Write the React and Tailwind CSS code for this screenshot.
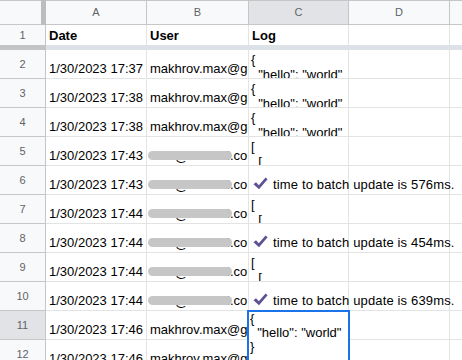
import React from "react";

const FONT = { fontFamily: '"Liberation Sans", Arial, sans-serif' };

const GRID = "border-[#e2e3e3]";
const HDRB = "border-[#c4c7c5]";

function Check() {
  return (
    <svg width="15" height="13" viewBox="0 0 15 13" className="shrink-0">
      <path d="M0.5 7.2 L3 5.2 L5.8 8.2 L12.6 0.5 L14.6 2.2 L6 12.3 Z" fill="#5e5194" />
    </svg>
  );
}

function RowHeader({ n, sel }) {
  return (
    <div
      className={`w-[46px] shrink-0 border-r border-b ${HDRB} ${sel ? "bg-[#e1e3e6]" : "bg-[#f8f9fa]"} flex items-center justify-center text-[11px] text-[#5f6368]`}
    >
      {n}
    </div>
  );
}

function Cell({ w, children, className = "" }) {
  return (
    <div className={`${w} shrink-0 border-r border-b ${GRID} overflow-hidden whitespace-nowrap flex items-end pb-[2px] pl-[3px] leading-[15px] ${className}`}>
      {children}
    </div>
  );
}

function Blurred() {
  return (
    <div className="w-[102px] shrink-0 border-r border-b border-[#e2e3e3] relative overflow-hidden">
      <span className="absolute left-[28px] bottom-[1px] leading-[15px]">@</span>
      <span className="absolute left-[80px] bottom-[2px] leading-[15px]">l.co</span>
      <div className="absolute left-[1px] top-[14px] w-[84px] h-[9px] rounded-full bg-[#c6c6c6] blur-[0.6px]" />
    </div>
  );
}

function LogMulti({ text }) {
  return (
    <div className={`w-[100px] shrink-0 border-r border-b ${GRID} overflow-hidden whitespace-pre pl-[2px] pt-[2px] leading-[15px]`}>
      {text}
    </div>
  );
}

function LogCheck({ ms }) {
  return (
    <div className={`w-[100px] shrink-0 border-r border-b ${GRID} whitespace-nowrap flex items-end pb-[2px] pl-[4px] leading-[15px] relative z-[1]`}>
      <span className="flex items-end gap-[5px]">
        <span className="mb-[2px]"><Check /></span>
        <span className="tracking-[0.15px]">time to batch update is {ms}ms.</span>
      </span>
    </div>
  );
}

function Empty({ w }) {
  return <div className={`${w} shrink-0 border-r border-b ${GRID}`} />;
}

const JSON_TXT = '{\n  "hello": "world"\n}';

const rows = [
  { n: 2, t: "17:37", user: "m", log: "json" },
  { n: 3, t: "17:38", user: "m", log: "json" },
  { n: 4, t: "17:38", user: "m", log: "json" },
  { n: 5, t: "17:43", user: "b", log: "arr" },
  { n: 6, t: "17:43", user: "b", log: "576" },
  { n: 7, t: "17:44", user: "b", log: "arr" },
  { n: 8, t: "17:44", user: "b", log: "454" },
  { n: 9, t: "17:44", user: "b", log: "arr" },
  { n: 10, t: "17:44", user: "b", log: "639" },
  { n: 11, t: "17:46", user: "m", log: "sel" },
  { n: 12, t: "17:46", user: "m", log: "json" },
];

export default function App() {
  return (
    <div className="w-[462px] h-[360px] overflow-hidden bg-white text-[13px] text-black" style={FONT}>
      {/* column header */}
      <div className="flex h-[25px]">
        <div className={`w-[41px] shrink-0 bg-[#f8f9fa] border-t border-b ${HDRB}`} />
        <div className="w-[5px] shrink-0 bg-[#bdbdbd]" />
        {[
          ["A", "w-[101px]", false],
          ["B", "w-[102px]", false],
          ["C", "w-[100px]", true],
          ["D", "w-[101px]", false],
        ].map(([l, w, sel]) => (
          <div
            key={l}
            className={`${w} shrink-0 border-t border-b border-r ${HDRB} ${sel ? "bg-[#e1e3e6]" : "bg-[#f8f9fa]"} flex items-center justify-center text-[11px] text-[#5f6368]`}
          >
            {l}
          </div>
        ))}
        <div className={`flex-1 border-t border-b ${HDRB} bg-[#f8f9fa]`} />
      </div>

      {/* row 1 */}
      <div className="flex h-[20px]">
        <div className={`w-[46px] shrink-0 border-r ${HDRB} bg-[#f8f9fa] flex items-center justify-center text-[11px] text-[#5f6368]`}>1</div>
        {["Date", "User", "Log"].map((h, i) => (
          <div
            key={h}
            className={`${["w-[101px]", "w-[102px]", "w-[100px]"][i]} shrink-0 border-r ${GRID} flex items-end pb-[2px] pl-[3px] leading-[15px] font-bold`}
          >
            {h}
          </div>
        ))}
        <div className={`w-[101px] shrink-0 border-r ${GRID}`} />
        <div className="flex-1" />
      </div>

      {/* frozen divider */}
      <div className="flex h-[5px]">
        <div className="w-[46px] shrink-0 bg-[#c4c4c4]" />
        <div className="flex-1 bg-[#dde1e8]" />
      </div>

      {rows.map((r) => (
        <div key={r.n} className="flex h-[29px]">
          <RowHeader n={r.n} sel={r.log === "sel"} />
          <Cell w="w-[101px]">1/30/2023 {r.t}</Cell>
          {r.user === "m" ? <Cell w="w-[102px]">makhrov.max@gmail.com</Cell> : <Blurred />}
          {r.log === "json" && <LogMulti text={JSON_TXT} />}
          {r.log === "arr" && <LogMulti text={"[\n  ["} />}
          {["576", "454", "639"].includes(r.log) && <LogCheck ms={r.log} />}
          {r.log === "sel" && (
            <div className={`w-[100px] shrink-0 border-r border-b ${GRID} relative z-10`}>
              <div className="absolute left-[-2px] top-[-1px] w-[103px] h-[60px] border-2 border-[#1a73e8] bg-white whitespace-pre pl-[1px] pt-0 leading-[14px]">
                {JSON_TXT}
              </div>
            </div>
          )}
          <Empty w="w-[101px]" />
          <div className={`flex-1 border-b ${GRID}`} />
        </div>
      ))}
    </div>
  );
}
